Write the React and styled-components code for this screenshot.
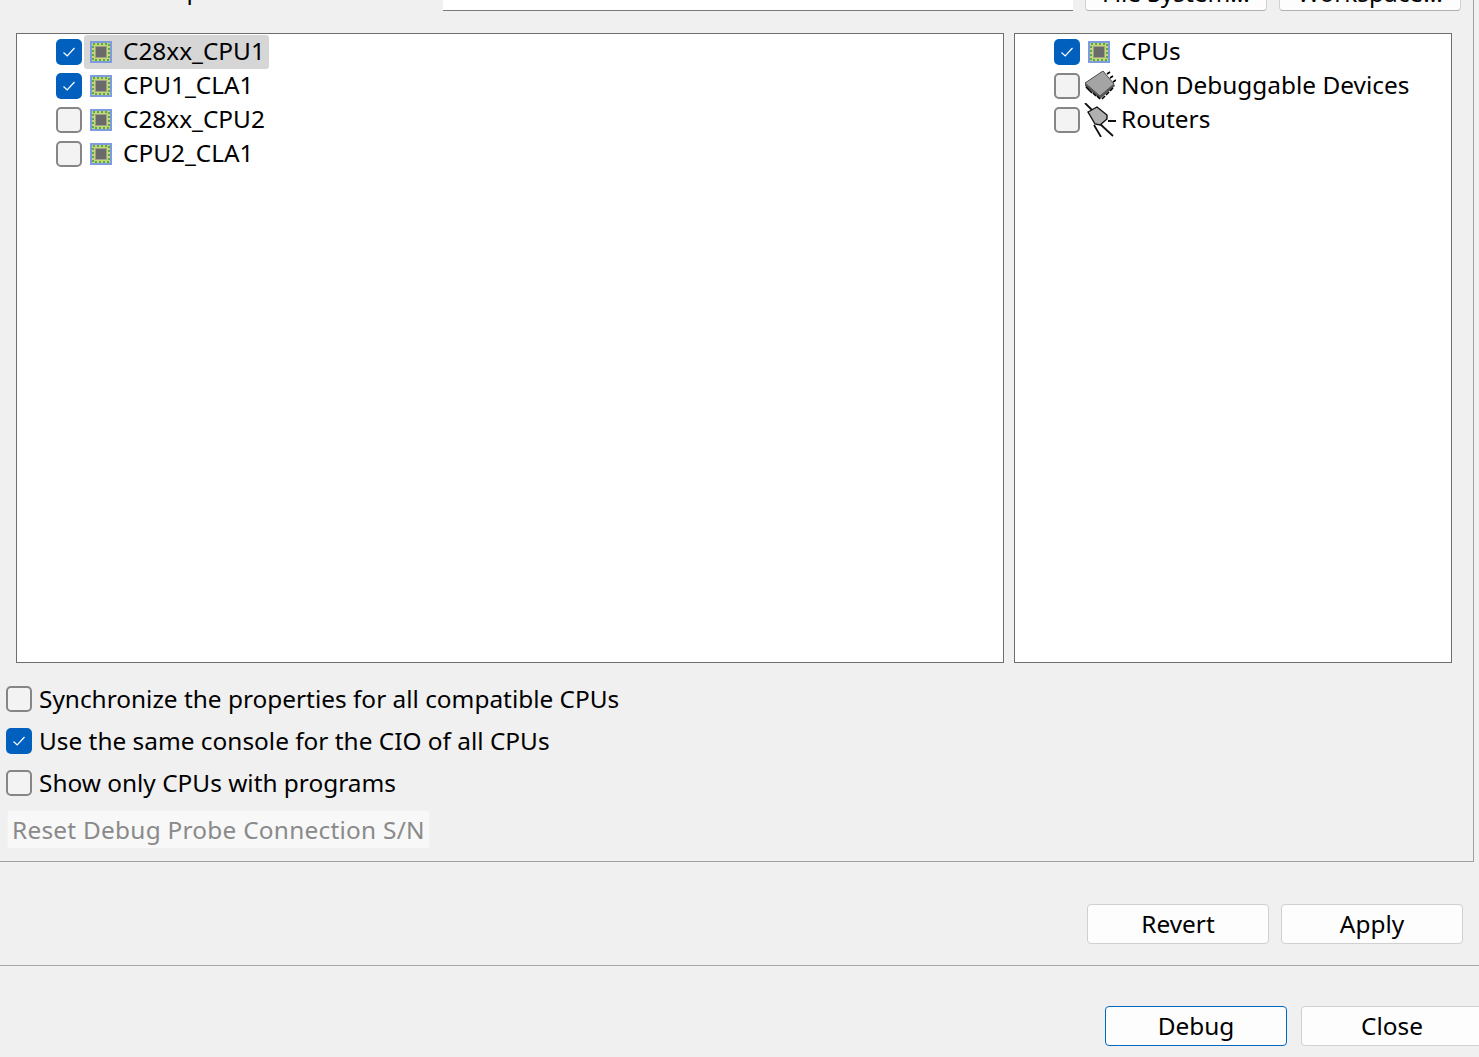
import React from 'react';
import styled, { createGlobalStyle } from 'styled-components';

const GlobalStyle = createGlobalStyle`
  html, body {
    margin: 0;
    padding: 0;
    background: #f0f0f0;
    overflow: hidden;
  }
  body {
    font-family: "Noto Sans", "Open Sans", "Liberation Sans", sans-serif;
    color: #000;
  }
`;

const Page = styled.div`
  width: 1479px;
  height: 1057px;
  overflow: hidden;
  display: flex;
  flex-direction: column;
  box-sizing: border-box;
`;

const Upper = styled.div`
  width: 1474px;
  height: 862px;
  flex: none;
  box-sizing: border-box;
  border-right: 1px solid #a0a0a0;
  border-bottom: 1px solid #a0a0a0;
`;

const TopRow = styled.div`
  height: 33px;
  margin-top: -20px;
  padding-left: 8px;
  display: flex;
  align-items: flex-start;
`;

const ProgramLabel = styled.div`
  width: 435px;
  height: 31px;
  box-sizing: border-box;
  padding-left: 46px;
  font-size: 24.4px;
  line-height: 31px;
  white-space: nowrap;
  margin-top: -6px;
`;

const PathInput = styled.div`
  width: 630px;
  height: 31px;
  box-sizing: border-box;
  background: #fff;
  border-bottom: 1px solid #7a7a7a;
`;

const TopButton = styled.div`
  width: 182px;
  height: 31px;
  margin-left: ${(p) => p.$gap}px;
  box-sizing: border-box;
  background: #fdfdfd;
  border: 1px solid #d0d0d0;
  border-bottom-color: #b0b0b0;
  border-radius: 4px;
  font-size: 24.4px;
  line-height: 24px;
  text-align: center;
`;

const Panels = styled.div`
  display: flex;
  gap: 10px;
  margin-left: 16px;
  margin-top: 20px;
`;

const TreePanel = styled.div`
  width: ${(p) => p.$width}px;
  height: 630px;
  box-sizing: border-box;
  background: #fff;
  border: 1px solid #6e6e6e;
  padding-top: 1px;
`;

const TreeRow = styled.div`
  height: 34px;
  display: flex;
  align-items: center;
  padding-left: 39px;
`;

const Box = styled.span`
  width: 26px;
  height: 26px;
  flex: none;
  box-sizing: border-box;
  display: flex;
  align-items: center;
  justify-content: center;
  border-radius: 5px;
  background: ${(p) => (p.$checked ? '#0160bd' : '#f3f3f3')};
  border: ${(p) => (p.$checked ? 'none' : '2px solid #868686')};
`;

const RowBody = styled.span`
  height: 34px;
  margin-left: 2px;
  padding: 0 4px 0 ${(p) => p.$inset}px;
  display: flex;
  align-items: center;
  border-radius: 3px;
  background: ${(p) => (p.$selected ? '#d6d6d6' : 'transparent')};
`;

const RowText = styled.span`
  font-size: 24.4px;
  line-height: 34px;
  margin-left: ${(p) => p.$gap}px;
  margin-top: -2px;
  white-space: nowrap;
`;

const Options = styled.div`
  margin-left: 6px;
  margin-top: 15px;
`;

const OptionRow = styled.div`
  height: 42px;
  display: flex;
  align-items: center;
`;

const OptionText = styled.span`
  font-size: 24.4px;
  margin-left: 7px;
  margin-top: -2px;
  white-space: nowrap;
`;

const ResetButton = styled.div`
  width: 423px;
  height: 39px;
  margin: 6px 0 0 1px;
  box-sizing: border-box;
  background: #f8f8f8;
  border: 1px solid #f2f2f2;
  border-radius: 3px;
  color: #8a8a8a;
  font-size: 24.4px;
  letter-spacing: 0.25px;
  line-height: 38px;
  padding-left: 4px;
  white-space: nowrap;
`;

const ApplyRow = styled.div`
  height: 104px;
  flex: none;
  box-sizing: border-box;
  border-bottom: 1px solid #a8a8a8;
  display: flex;
  justify-content: flex-end;
  gap: 12px;
  padding: 42px 16px 0 0;
`;

const DialogRow = styled.div`
  flex: 1;
  display: flex;
  justify-content: flex-end;
  gap: 14px;
  padding: 40px 0 0 0;
  margin-right: -4px;
`;

const ActionButton = styled.div`
  width: 182px;
  height: 40px;
  box-sizing: border-box;
  background: #fdfdfd;
  border: 1px solid ${(p) => (p.$primary ? '#0067c0' : '#d0d0d0')};
  border-radius: 4px;
  font-size: 24.4px;
  line-height: 38px;
  text-align: center;
`;

const Check = () => (
  <svg width="14" height="14" viewBox="0 0 14 14" fill="none">
    <path d="M1.5 7.5 L5.2 11 L12.5 3" stroke="#fff" strokeWidth="1.2" />
  </svg>
);

// cpu chip tree icon
const ChipIcon = () => (
  <svg width="22" height="22" viewBox="0 0 22 22" shapeRendering="crispEdges">
    <rect x="0" y="0" width="22" height="22" fill="#7f9be0" />
    <rect x="2" y="2" width="18" height="18" fill="#c8d870" />
    <rect x="3" y="3" width="16" height="16" fill="none" stroke="#58a858" strokeWidth="2" strokeDasharray="2 2" />
    <rect x="5" y="5" width="12" height="12" fill="#a0a090" />
    <rect x="6" y="6" width="10" height="10" fill="#6a6a6a" />
  </svg>
);

const DeviceIcon = () => (
  <svg width="32" height="30" viewBox="0 0 32 30">
    <path d="M1 12 L19 0 L30 13 L16 25 Z" fill="#a4a4a4" stroke="#4a4a4a" strokeWidth="1" />
    <path d="M1 12 L1 15 L16 28 L31 15 L30 13 L16 25 Z" fill="#555" />
    <path d="M2 16l3 3M5 19l3 3M9 22l3 3M13 25l3 3M18 28l3-3M22 24l3-3M26 20l3-3M23 3l3-2M26 7l3-2M29 11l3-2" stroke="#000" strokeWidth="1.6" />
  </svg>
);

const RouterIcon = () => (
  <svg width="32" height="34" viewBox="0 0 32 34">
    <path d="M1 0 L8 7M24 18 L32 18M15 20 L29 33M10 22 L17 34" stroke="#111" strokeWidth="1.8" fill="none" />
    <path d="M4 9 L13 4 L23 12 L23 16 L16 22 L11 21 Z" fill="#b0b0b0" stroke="#111" strokeWidth="1.4" />
  </svg>
);

const targets = [
  { name: 'C28xx_CPU1', checked: true, selected: true },
  { name: 'CPU1_CLA1', checked: true },
  { name: 'C28xx_CPU2', checked: false },
  { name: 'CPU2_CLA1', checked: false },
];

const groups = [
  { name: 'CPUs', checked: true, icon: <ChipIcon />, inset: 6, gap: 11 },
  { name: 'Non Debuggable Devices', checked: false, icon: <DeviceIcon />, inset: 2, gap: 5 },
  { name: 'Routers', checked: false, icon: <RouterIcon />, inset: 2, gap: 5 },
];

const options = [
  { label: 'Synchronize the properties for all compatible CPUs', checked: false },
  { label: 'Use the same console for the CIO of all CPUs', checked: true },
  { label: 'Show only CPUs with programs', checked: false },
];

const App = () => (
  <Page>
    <GlobalStyle />
    <Upper>
      <TopRow>
        <ProgramLabel>Device Setup:</ProgramLabel>
        <PathInput />
        <TopButton $gap={12}>File System...</TopButton>
        <TopButton $gap={12}>Workspace...</TopButton>
      </TopRow>
      <Panels>
        <TreePanel $width={988}>
          {targets.map((t) => (
            <TreeRow key={t.name}>
              <Box $checked={t.checked}>{t.checked && <Check />}</Box>
              <RowBody $selected={t.selected} $inset={6}>
                <ChipIcon />
                <RowText $gap={11}>{t.name}</RowText>
              </RowBody>
            </TreeRow>
          ))}
        </TreePanel>
        <TreePanel $width={438}>
          {groups.map((g) => (
            <TreeRow key={g.name}>
              <Box $checked={g.checked}>{g.checked && <Check />}</Box>
              <RowBody $inset={g.inset}>
                {g.icon}
                <RowText $gap={g.gap}>{g.name}</RowText>
              </RowBody>
            </TreeRow>
          ))}
        </TreePanel>
      </Panels>
      <Options>
        {options.map((o) => (
          <OptionRow key={o.label}>
            <Box $checked={o.checked}>{o.checked && <Check />}</Box>
            <OptionText>{o.label}</OptionText>
          </OptionRow>
        ))}
        <ResetButton>Reset Debug Probe Connection S/N</ResetButton>
      </Options>
    </Upper>
    <ApplyRow>
      <ActionButton>Revert</ActionButton>
      <ActionButton>Apply</ActionButton>
    </ApplyRow>
    <DialogRow>
      <ActionButton $primary>Debug</ActionButton>
      <ActionButton>Close</ActionButton>
    </DialogRow>
  </Page>
);

export default App;
